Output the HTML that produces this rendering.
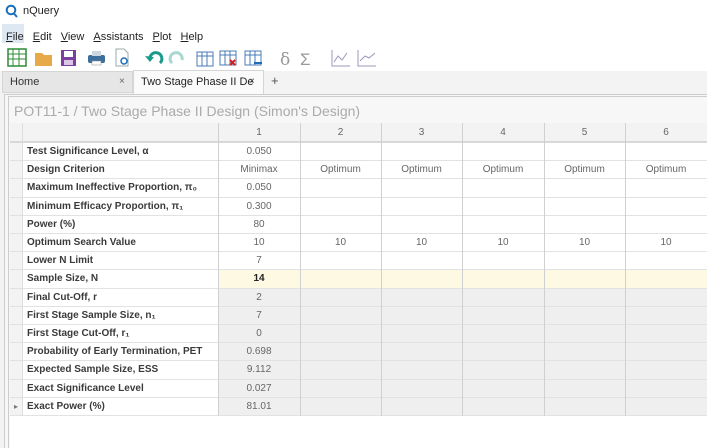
<!DOCTYPE html>
<html><head><meta charset="utf-8"><style>
*{margin:0;padding:0;box-sizing:border-box}
body{width:707px;height:448px;overflow:hidden;background:#f3f3f3;font-family:"Liberation Sans",sans-serif;position:relative;color:#222}
.a{position:absolute}
.menu span{margin-right:9px;font-size:11px}
.cell{position:absolute;height:18.2px;line-height:18px;font-size:10px;text-align:center;color:#666;border-bottom:1px solid #e2e2e2}
.lab{position:absolute;left:22px;width:196px;height:18.2px;line-height:18px;font-size:10px;font-weight:bold;color:#3a3a3a;padding-left:5px;border-bottom:1px solid #e2e2e2;background:#fff}
</style></head><body>
<div class="a" style="left:0;top:0;width:707px;height:23px;background:#fff"></div>
<svg class="a" style="left:5px;top:4px" width="14" height="14"><circle cx="6" cy="6" r="4.3" fill="none" stroke="#1c6fb8" stroke-width="2"/><path d="M8.5 9 L12 13" stroke="#1c6fb8" stroke-width="2"/></svg>
<div class="a" style="left:23px;top:5px;font-size:11px">nQuery</div>
<div class="a" style="left:0;top:23px;width:707px;height:22px;background:#fff"></div>
<div class="a" style="left:2px;top:24px;width:22px;height:19px;background:#dde8f3"></div>
<div class="a menu" style="left:6px;top:27px"><span><u>F</u>ile</span><span><u>E</u>dit</span><span><u>V</u>iew</span><span><u>A</u>ssistants</span><span><u>P</u>lot</span><span><u>H</u>elp</span></div>
<div class="a" style="left:0;top:45px;width:707px;height:26px;background:#fff"></div>
<svg class="a" style="left:0;top:45px" width="400" height="26">
<rect x="8" y="4" width="18" height="17" fill="#fff" stroke="#2e8b3a" stroke-width="1.5"/><path d="M8 9H26M8 14H26M13 4V21M19 4V21" stroke="#2e8b3a"/>
<path d="M35 8h7l2 2h8v11H35z" fill="#e8a94a"/>
<rect x="61" y="5" width="15" height="16" fill="#7b3fa0"/><rect x="64" y="6" width="9" height="6" fill="#fff"/><rect x="64" y="15" width="9" height="5" fill="#d9c7e4"/>
<rect x="88" y="10" width="17" height="8" rx="2" fill="#3c6f9c"/><rect x="92" y="6" width="9" height="5" fill="#cbd6e0"/><rect x="92" y="16" width="9" height="4" fill="#fff" stroke="#888" stroke-width=".5"/>
<path d="M116 4h8l4 4v13h-12z" fill="#fff" stroke="#9aa"/><circle cx="124" cy="16" r="3" fill="none" stroke="#1c6fb8" stroke-width="1.5"/>
<path d="M150 15a6 6 0 1 1 10 3" fill="none" stroke="#1a9a8a" stroke-width="3"/><path d="M145 11l5 6 4-5z" fill="#1a9a8a"/>
<path d="M182 15a6 6 0 1 0 -10 3" fill="none" stroke="#a7d7cf" stroke-width="3"/>
<rect x="197" y="7" width="16" height="14" fill="#fff" stroke="#4a7bb5"/><path d="M197 11H213M202 7V21M207 7V21" stroke="#4a7bb5"/>
<rect x="220" y="6" width="16" height="14" fill="#fff" stroke="#4a7bb5"/><path d="M220 10H236M225 6V20M230 6V20" stroke="#4a7bb5"/><path d="M230 15l5 5M235 15l-5 5" stroke="#d02020" stroke-width="2"/>
<rect x="245" y="6" width="16" height="14" fill="#fff" stroke="#4a7bb5"/><path d="M245 10H261M250 6V20M255 6V20" stroke="#4a7bb5"/><path d="M254 18h8" stroke="#1c6fb8" stroke-width="2"/>
<text x="280" y="20" font-size="17" fill="#999" font-family="DejaVu Serif">δ</text>
<text x="300" y="20" font-size="17" fill="#999">Σ</text>
<path d="M332 5V21H350M334 17l4-6 4 4 5-7" fill="none" stroke="#99b"/>
<path d="M358 5V21H376M360 16l5-5 4 2 6-5" fill="none" stroke="#99b"/>
</svg>
<div class="a" style="left:2px;top:71px;width:131px;height:22px;background:#e6e6e6;border:1px solid #d5d5d5"></div>
<div class="a" style="left:10px;top:76px;font-size:11px;color:#333">Home</div>
<div class="a" style="left:119px;top:76px;font-size:10px;color:#666">×</div>
<div class="a" style="left:133px;top:70px;width:131px;height:24px;background:#fafafa;border:1px solid #d5d5d5;border-bottom:none"></div>
<div class="a" style="left:141px;top:76px;font-size:11px;color:#222">Two Stage Phase II De</div>
<div class="a" style="left:249px;top:76px;font-size:10px;color:#444">×</div>
<div class="a" style="left:271px;top:73px;font-size:13px;color:#555">+</div>
<div class="a" style="left:4px;top:94px;width:703px;height:354px;border-left:1px solid #ccc;border-top:1px solid #ccc;background:#f7f7f7"></div>
<div class="a" style="left:8px;top:96px;width:699px;height:352px;border-left:1px solid #ccc;border-top:1px solid #ccc;background:#f7f7f7"></div>
<div class="a" style="left:14px;top:103px;font-size:14px;color:#aaa">POT11-1 / Two Stage Phase II Design (Simon's Design)</div>
<div class="a" style="left:10px;top:123px;width:697px;height:325px;background:#fff;border-top:1px solid #ccc"></div>
<div class="a" style="left:10px;top:123px;width:697px;height:20px;background:#f3f3f3;border-bottom:2px solid #d8d8d8"></div>
<div id="g"></div>
<script>
var L=["Test Significance Level, α","Design Criterion","Maximum Ineffective Proportion, π₀","Minimum Efficacy Proportion, π₁","Power (%)","Optimum Search Value","Lower N Limit","Sample Size, N","Final Cut-Off, r","First Stage Sample Size, n₁","First Stage Cut-Off, r₁","Probability of Early Termination, PET","Expected Sample Size, ESS","Exact Significance Level","Exact Power (%)"];
var V=["0.050","Minimax","0.050","0.300","80","10","7","14","2","7","0","0.698","9.112","0.027","81.01"];
var xs=[218,300,381,462,544,625,707],h="";
for(var c=0;c<6;c++)h+='<div class="cell" style="top:124px;left:'+xs[c]+'px;width:'+(xs[c+1]-xs[c])+'px;border:none">'+(c+1)+'</div>';
for(var i=0;i<15;i++){var t=143+i*18.2;
h+='<div class="a" style="left:10px;top:'+t+'px;width:12px;height:18.2px;background:#f3f3f3;border-bottom:1px solid #e2e2e2;font-size:8px;color:#777;text-align:center;line-height:18px">'+(i==14?'▸':'')+'</div>';
h+='<div class="lab" style="top:'+t+'px">'+L[i]+'</div>';
for(var c=0;c<6;c++){var bg=i==7?'#fdf9e3':(i>7?'#efefef':'#fff');var v=c==0?V[i]:(i==1?'Optimum':(i==5?'10':''));
h+='<div class="cell" style="top:'+t+'px;left:'+xs[c]+'px;width:'+(xs[c+1]-xs[c])+'px;background:'+bg+';'+(i==7&&c==0?'font-weight:bold;color:#222':'')+'">'+v+'</div>';}}
for(var c=0;c<6;c++)h+='<div class="a" style="left:'+xs[c]+'px;top:123px;width:1px;height:293px;background:#d0d0d0"></div>';
h+='<div class="a" style="left:22px;top:123px;width:1px;height:293px;background:#ddd"></div>';
document.getElementById('g').innerHTML=h;
</script>
</body></html>
